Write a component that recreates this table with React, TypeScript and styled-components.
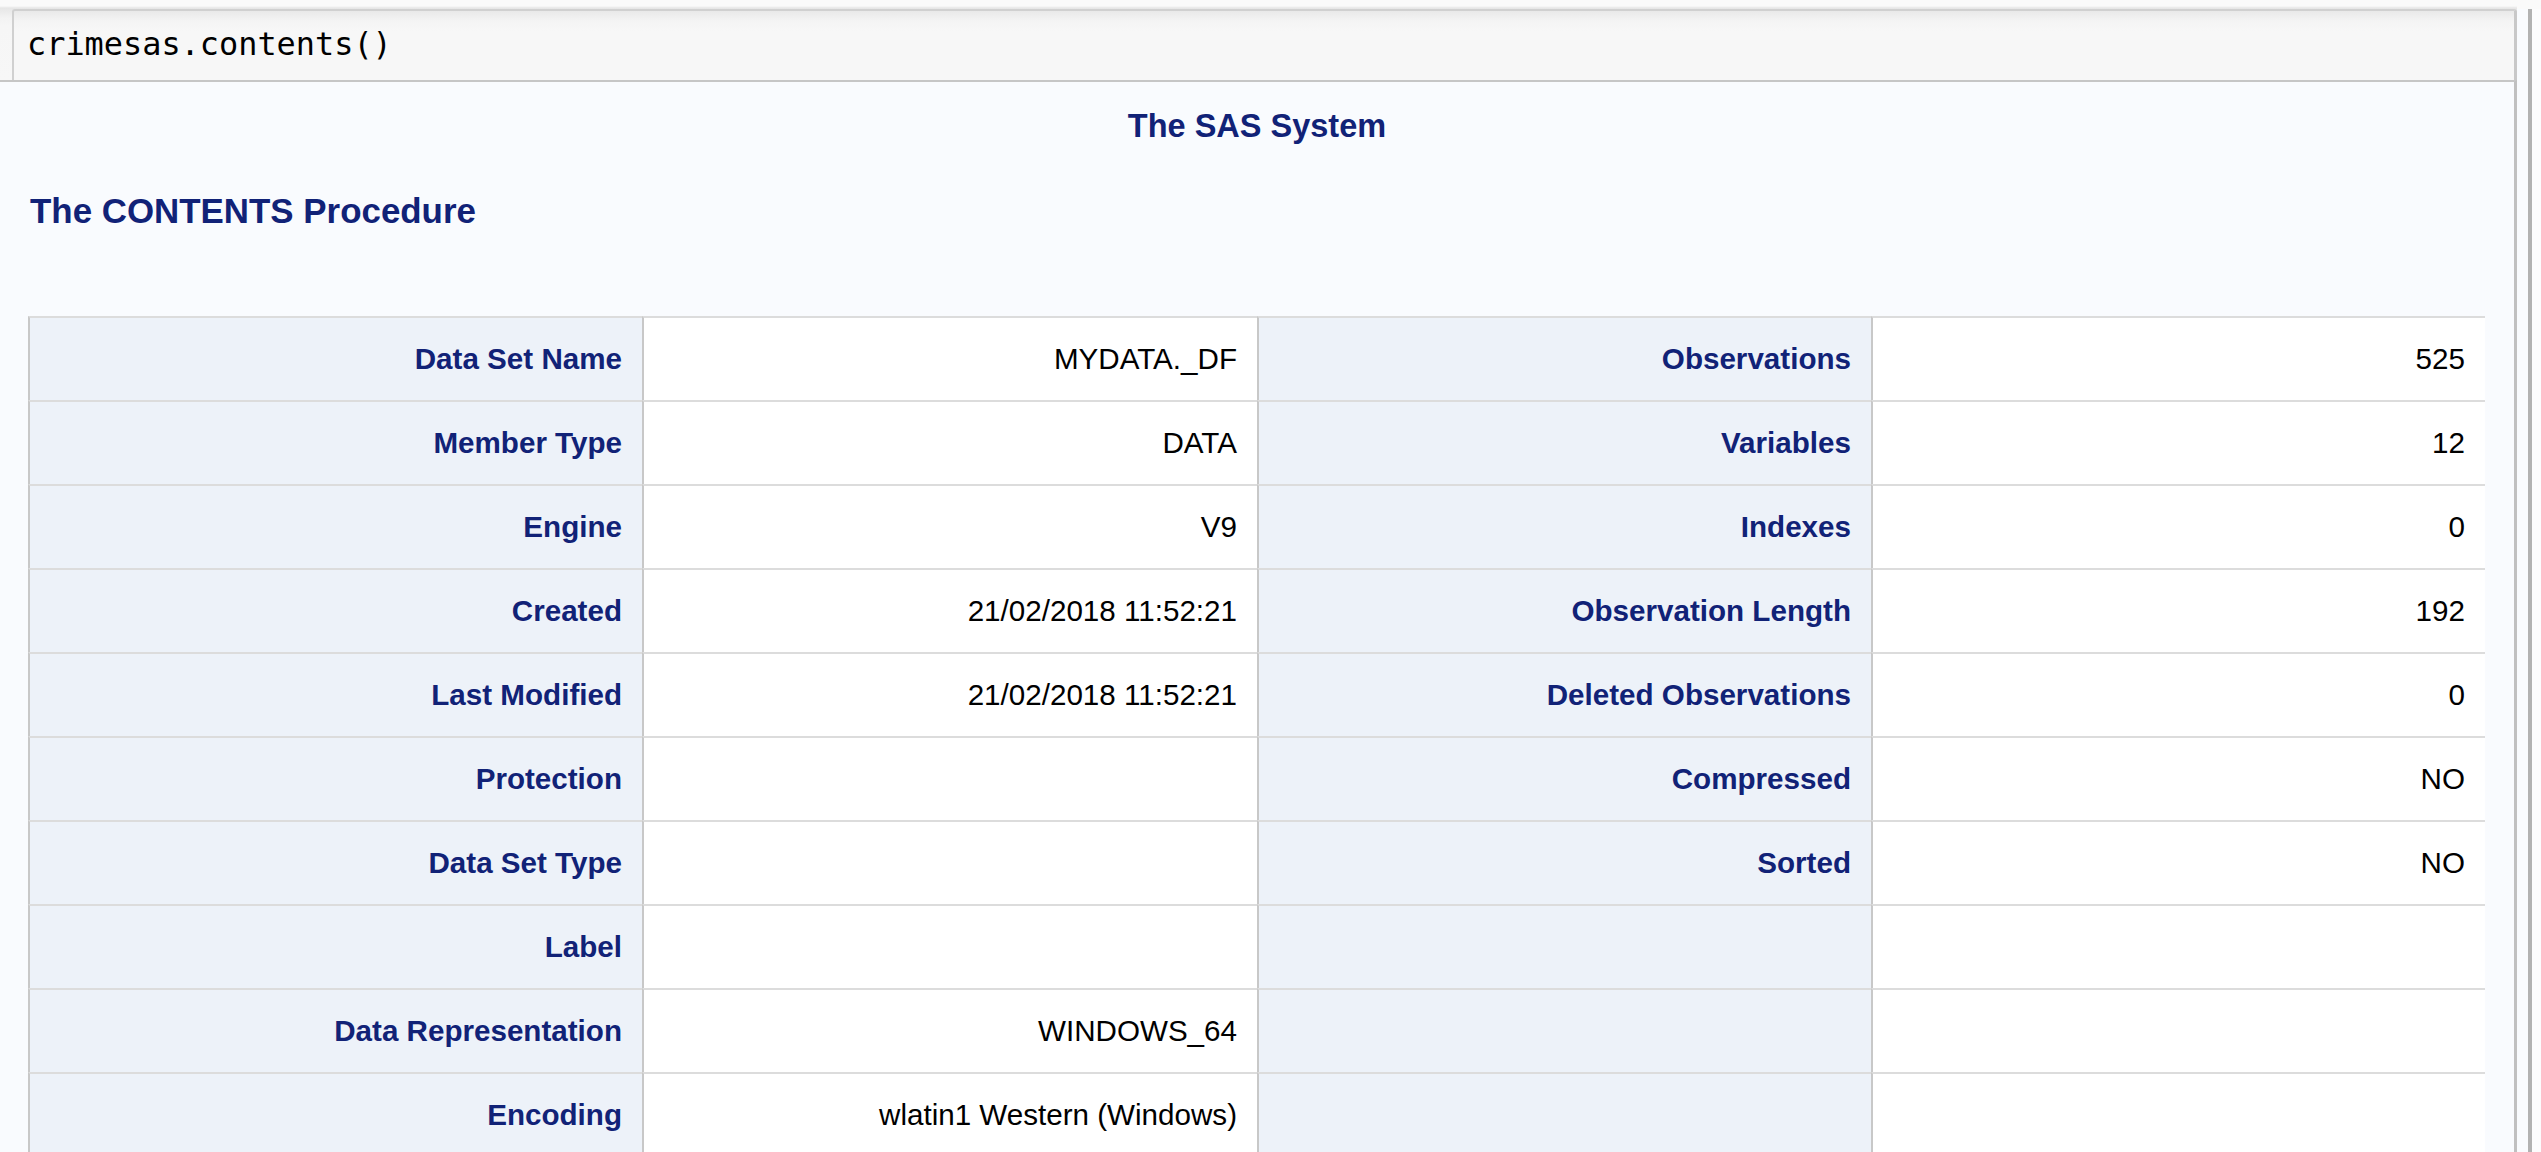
import React from "react";
import styled, { createGlobalStyle } from "styled-components";

const GlobalStyle = createGlobalStyle`
  html, body {
    margin: 0;
    padding: 0;
    background: #f9fbfe;
    overflow: hidden;
  }
  body {
    font-family: "Liberation Sans", Arial, sans-serif;
  }
`;

const Page = styled.div`
  display: flex;
  width: 2541px;
  height: 1152px;
  overflow: hidden;
`;

const Main = styled.div`
  flex: 0 0 2517px;
  display: flex;
  flex-direction: column;
`;

const Gutter = styled.div`
  flex: 1;
  display: flex;
  flex-direction: column;
  background: #fafafa;
`;

const GutterTop = styled.div`
  height: 9px;
  background: #fafafa;
`;

const GutterBody = styled.div`
  flex: 1;
  display: flex;
  background: #fcfcfd;
`;

const GutterFill = styled.div`
  width: 11px;
  background: #f9fbfe;
`;

const GutterRule = styled.div`
  width: 4px;
  background: #b2b2b2;
`;

const InputRow = styled.div`
  display: flex;
  padding-top: 9px;
  padding-left: 12px;
  background: linear-gradient(
    to bottom,
    #fafafa 0px,
    #fafafa 6px,
    #e6e6e6 8px,
    #f3f3f3 18px,
    #f6f6f6 26px,
    #f7f7f7 100%
  );
`;

const CodeCell = styled.div`
  flex: 1;
  height: 71px;
  box-sizing: border-box;
  border: 2px solid #d0d0d0;
  border-bottom: none;
  border-right: 3px solid #c8c8c8;
  border-radius: 3px 3px 0 0;
  padding: 15px 0 0 13px;
  background: linear-gradient(to bottom, #e9e9e9 0px, #f4f4f4 10px, #f7f7f7 20px);
`;

const Code = styled.pre`
  margin: 0;
  font-family: "DejaVu Sans Mono", "Liberation Mono", monospace;
  font-size: 31.9px;
  line-height: 36px;
  color: #000;
`;

const Output = styled.div`
  flex: 1;
  border-top: 2px solid #c6c6c6;
  border-right: 3px solid #c0c0c0;
  background: #f9fbfe;
  padding-top: 28px;
  display: flex;
  flex-direction: column;
`;

const SystemTitle = styled.div`
  text-align: center;
  font-size: 32.5px;
  line-height: 1;
  font-weight: bold;
  color: #112277;
`;

const ProcTitle = styled.div`
  margin-top: 51px;
  margin-left: 30px;
  font-size: 34.9px;
  line-height: 1;
  font-weight: bold;
  color: #112277;
`;

const Table = styled.div`
  margin-top: 88px;
  margin-left: 28px;
  width: 2457px;
  display: grid;
  grid-template-columns: 614px 615px 614px 614px;
  grid-auto-rows: 84px;
`;

const Cell = styled.div<{ $header?: boolean }>`
  box-sizing: border-box;
  border-top: 2px solid #dcdcdc;
  border-left: 2px solid #c8c8c8;
  background: ${(p) => (p.$header ? "#edf2f9" : "#ffffff")};
  color: ${(p) => (p.$header ? "#112277" : "#000000")};
  font-weight: ${(p) => (p.$header ? "bold" : "normal")};
  font-size: 29.6px;
  display: flex;
  align-items: center;
  justify-content: flex-end;
  padding-right: 20px;
  white-space: nowrap;
`;

const rows: [string, string, string, string][] = [
  ["Data Set Name", "MYDATA._DF", "Observations", "525"],
  ["Member Type", "DATA", "Variables", "12"],
  ["Engine", "V9", "Indexes", "0"],
  ["Created", "21/02/2018 11:52:21", "Observation Length", "192"],
  ["Last Modified", "21/02/2018 11:52:21", "Deleted Observations", "0"],
  ["Protection", "", "Compressed", "NO"],
  ["Data Set Type", "", "Sorted", "NO"],
  ["Label", "", "", ""],
  ["Data Representation", "WINDOWS_64", "", ""],
  ["Encoding", "wlatin1 Western (Windows)", "", ""],
];

export default function App() {
  return (
    <>
      <GlobalStyle />
      <Page>
        <Main>
          <InputRow>
            <CodeCell>
              <Code>crimesas.contents()</Code>
            </CodeCell>
          </InputRow>
          <Output>
            <SystemTitle>The SAS System</SystemTitle>
            <ProcTitle>The CONTENTS Procedure</ProcTitle>
            <Table>
              {rows.map((r, i) => (
                <React.Fragment key={i}>
                  <Cell $header>{r[0]}</Cell>
                  <Cell>{r[1]}</Cell>
                  <Cell $header>{r[2]}</Cell>
                  <Cell>{r[3]}</Cell>
                </React.Fragment>
              ))}
            </Table>
          </Output>
        </Main>
        <Gutter>
          <GutterTop />
          <GutterBody>
            <GutterFill />
            <GutterRule />
          </GutterBody>
        </Gutter>
      </Page>
    </>
  );
}
